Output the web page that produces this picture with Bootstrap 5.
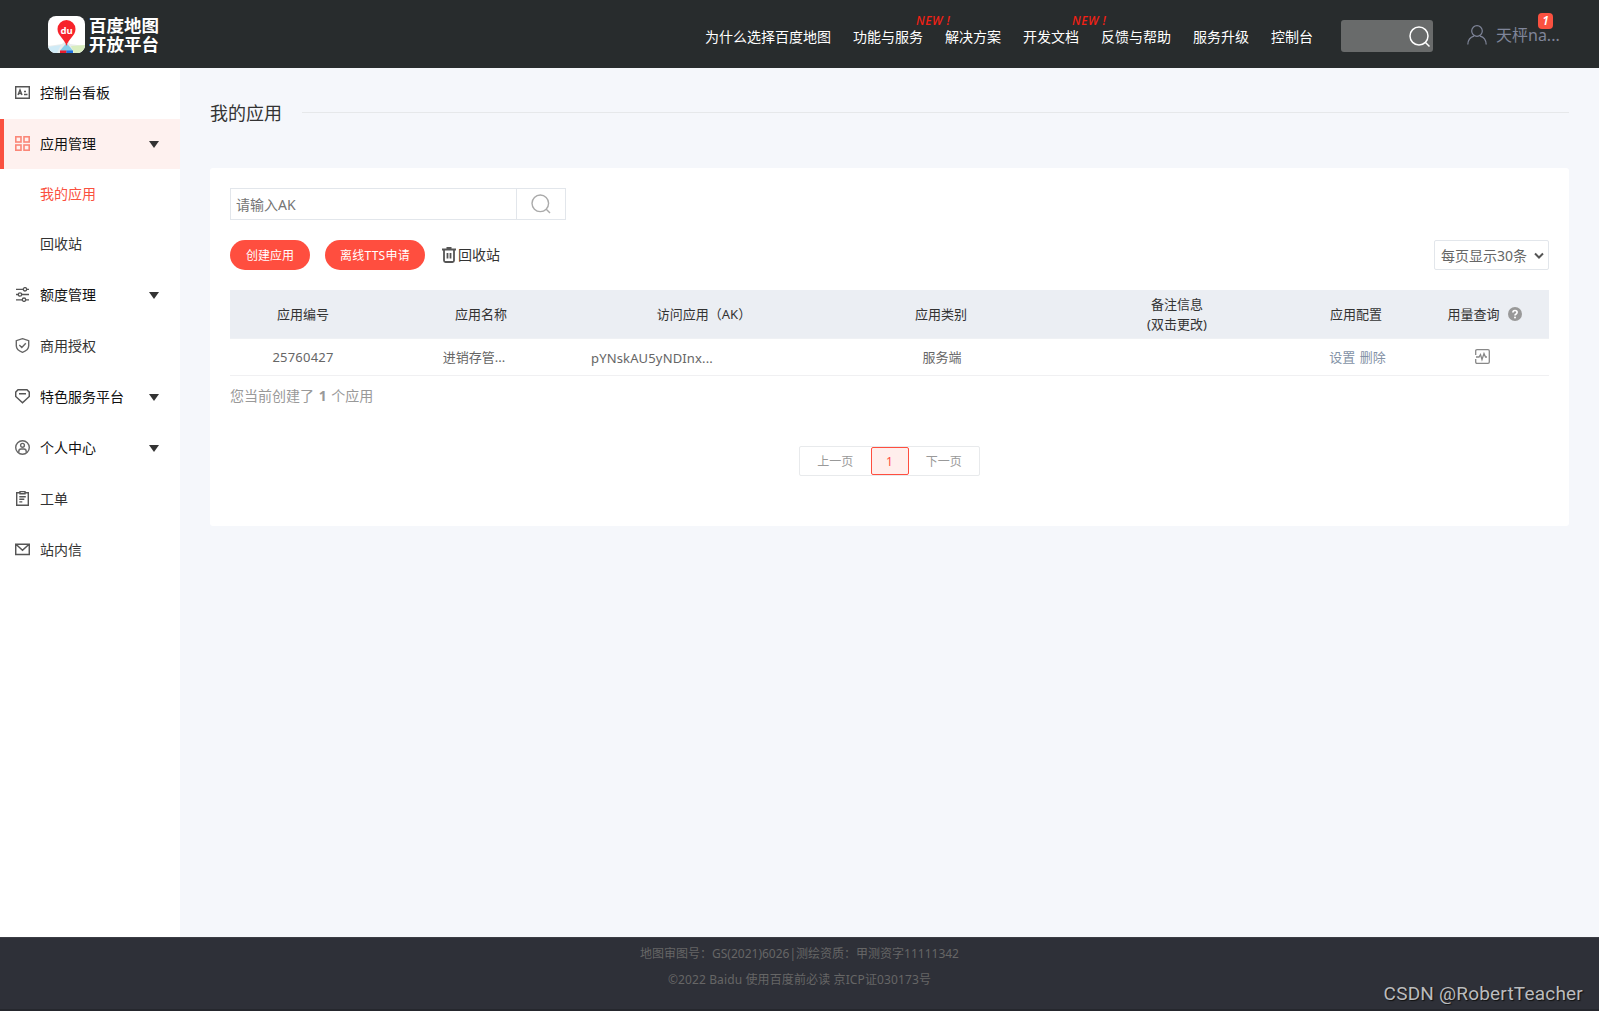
<!DOCTYPE html>
<html lang="zh-CN">
<head>
<meta charset="utf-8">
<meta name="viewport" content="width=device-width, initial-scale=1">
<title>百度地图开放平台 - 我的应用</title>
<link rel="stylesheet" href="https://cdn.jsdelivr.net/npm/bootstrap@5.3.0/dist/css/bootstrap.min.css">
<style>
body{font-family:"Noto Sans","Noto Sans CJK SC",sans-serif;font-size:14px;line-height:20px;color:#333;background:#f5f7fb;height:1011px;overflow:hidden}
a{color:inherit;text-decoration:none}
svg{display:block;flex:none}
.topbar{height:68px;background:#282c2d;color:#fff;padding:0 39px 0 48px}
.brand-words{font-family:"Noto Sans CJK SC",sans-serif;font-weight:700;font-size:17.5px;line-height:19px;margin-left:4px;padding-bottom:1px}
.topnav{gap:22px;padding-top:6px;margin-right:28px}
.tag-new{position:absolute;left:-29px;top:-14px;font-size:12px;font-style:italic;font-weight:500;color:#f32014;line-height:16px;letter-spacing:.5px;white-space:nowrap}
.topsearch{width:92px;height:32px;background:#696b6b;border-radius:3px;padding-right:3px;margin:4px 34px 0 0}
.user-icon{margin-top:2px}
.username{font-size:16px;color:#7f8599;width:64px;margin:2px 0 0 9px;white-space:nowrap}
.msg-count{position:absolute;left:42px;top:-12px;width:15px;height:16px;border-radius:4px;background:#fa5140;color:#fff;font-size:12px;font-style:italic;font-weight:600;line-height:16px;text-align:center}
.sidebar{width:180px;background:#fff}
.side-item{height:50px;margin-top:1px;padding-left:15px;padding-right:21px;color:#111}
.side-item:first-child{margin-top:0}
.side-item svg{margin-top:-2px}
.side-item span{margin-left:10px}
.side-item.plain{color:#333}
.side-item.current{background:#fef1ef;border-left:4px solid #fa5140;padding-left:11px}
.side-sub{height:50px;padding-left:40px}
.caret-down{margin-left:auto;width:0;height:0;border:5px solid transparent;border-top:7px solid #333;border-bottom:0}
.red-text{color:#fa5140}
.content-area{padding:30px 30px 0}
.page-title{font-size:18px;line-height:30px;font-weight:400;margin:0 20px 0 0}
.title-line{height:1px;background:#e6e8ea;margin-top:-1px}
.panel{height:358px;border-radius:3px;margin-top:40px;padding:20px}
.ak-search{width:336px;height:32px;border:1px solid #e2e6eb}
.ak-search input{border:0;outline:0;padding:2px 5px 0;width:285px;font-size:14px;background:none}
.ak-search input::placeholder{color:#757575;opacity:1}
.ak-btn{border:0;border-left:1px solid #e2e6eb;background:#fff;padding:0;width:49px}
.tool-row{margin-top:20px}
.pill{height:30px;width:80px;border:0;border-radius:15px;background:#ff4e3f;color:#fff;font-size:12px;line-height:28px;padding:2px 0 0;text-align:center}
.pill.wide{width:100px;margin-left:15px;letter-spacing:.25px}
.bin-link{margin-left:17px;gap:2px}
.page-size{width:115px;height:30px;border:1px solid #e2e6eb;border-radius:2px;padding:1px 4px 0 6px;color:#666;background:#fff}
.app-table{width:1319px;table-layout:fixed;margin:20px 0 0;font-size:13px;color:#666;text-align:center;border-collapse:separate;border-spacing:0}
.app-table th{height:49px;padding:0 0 1px;background:#ebeef3;color:#333;font-weight:400;vertical-align:middle;border-bottom:1px solid #eff1f4}
.app-table td{height:37px;padding:0 0 1px;vertical-align:middle;border-bottom:1px solid #f0f0f2}
.app-table .ak-head{padding-left:6px}
.app-table .usage-head{padding-right:4px}
.app-table .id-cell{letter-spacing:.22px}
.app-table .name-cell{padding-right:14px}
.app-table .ak-cell{padding:2px 98px 0 0;letter-spacing:.15px}
.app-table .kind-cell{padding-left:2px}
.app-table .link-cell{color:#8492a6;padding-left:3px;word-spacing:1px}
.app-table .usage-cell{padding-right:8px}
.summary{color:#999;margin:10px 0 0;word-spacing:1px}
.pager{height:30px;border:1px solid #e8eaec;border-radius:2px;color:#999;font-size:12px;line-height:30px;margin-top:40px}
.pager a{width:70.5px;text-align:center}
.pager .on{width:38px;border:1px solid #ff4e3f;border-radius:2px;background:#ffeeec;color:#ff4e3f;line-height:28px}
.foot{height:74px;background:#2e3038;border-top:1px solid #3b3d44;border-bottom:2px solid #25272d;font-size:12px;line-height:26px;color:#666;text-align:center;padding-top:3px}
.legal{letter-spacing:.12px}
.watermark{position:absolute;right:16px;bottom:2px;font-family:Roboto,sans-serif;font-size:19px;line-height:26px;color:#bbbcbe;text-shadow:1px 1px 1px #111;letter-spacing:.2px;white-space:nowrap}
</style>
<script src="https://cdn.jsdelivr.net/npm/bootstrap@5.3.0/dist/js/bootstrap.bundle.min.js"></script>
</head>
<body class="d-flex flex-column">
<header class="topbar d-flex align-items-center">
  <a href="#" class="d-flex align-items-center me-auto">
    <svg width="37" height="37" viewBox="0 0 37 37"><defs><clipPath id="tile"><rect width="37" height="37" rx="8"/></clipPath></defs><g clip-path="url(#tile)"><rect width="37" height="37" fill="#fff"/><path d="M0 30l14-2 5-5 3 5 15 2v7H0z" fill="#e9ecec"/><path d="M0 31l13-2-4 8H0z" fill="#cfeaf6"/><path d="M18.500 27l-6 7v3h12v-3z" fill="#86cde8"/><path d="M23 30l14-1v8H26z" fill="#d9eebf"/><path d="M12 34.500h6.500V37H12z" fill="#e91d2d"/><path d="M18.500 34.500H25V37h-6.500z" fill="#1f6fe0"/></g><path d="M18.500 30C17 23 9.500 20 9.500 13a9 9 0 0 1 18 0c0 7-7.500 10-9 17z" fill="#f7232b"/><text x="18.500" y="17.500" text-anchor="middle" font-family="Noto Sans" font-weight="700" font-size="9.500" fill="#fff">du</text></svg>
    <div class="brand-words">百度地图<br>开放平台</div>
  </a>
  <nav class="topnav d-flex">
    <a href="#">为什么选择百度地图</a><a href="#">功能与服务</a>
    <a href="#" class="position-relative"><span class="tag-new">NEW !</span>解决方案</a><a href="#">开发文档</a>
    <a href="#" class="position-relative"><span class="tag-new">NEW !</span>反馈与帮助</a><a href="#">服务升级</a><a href="#">控制台</a>
  </nav>
  <div class="topsearch d-flex align-items-center justify-content-end"><svg width="21" height="21" viewBox="0 0 21 21" fill="none" stroke="#fff" stroke-width="1.500"><circle cx="10" cy="10" r="9"/><path d="M16 16l4.500 4.500"/></svg></div>
  <svg class="user-icon" width="20" height="20" viewBox="0 0 20 20" fill="none" stroke="#7f8599" stroke-width="1.200"><circle cx="10" cy="6" r="5.300"/><path d="M.8 19.500C1 15 4 12 7 11.200M13 11.200c3.500.8 6 4 6.200 8.300"/></svg>
  <div class="username position-relative">天枰na...<span class="msg-count">1</span></div>
</header>
<div class="d-flex flex-grow-1">
  <aside class="sidebar">
    <a href="#" class="side-item d-flex align-items-center"><svg width="15" height="15" viewBox="0 0 15 15" fill="none" stroke="#555" stroke-width="1.400"><path d="M.7 1.700h13.600v11.600H.7z"/><path d="M3 10l2-5 2 5M3.700 8.500h2.600M9 6.500h2M9 9.500h3.500"/></svg><span>控制台看板</span></a>
    <a href="#" class="side-item current d-flex align-items-center"><svg width="15" height="15" viewBox="0 0 15 15" fill="none" stroke="#fb8778" stroke-width="1.600"><rect x=".8" y=".8" width="5.200" height="5.200"/><rect x="9" y=".8" width="5.200" height="5.200"/><rect x=".8" y="9" width="5.200" height="5.200"/><rect x="9" y="9" width="5.200" height="5.200"/></svg><span>应用管理</span><i class="caret-down"></i></a>
    <a href="#" class="side-sub red-text d-flex align-items-center">我的应用</a>
    <a href="#" class="side-sub d-flex align-items-center">回收站</a>
    <a href="#" class="side-item d-flex align-items-center"><svg width="15" height="15" viewBox="0 0 15 15" fill="none" stroke="#555" stroke-width="1.300"><path d="M1 2.300h7M12 2.300h2M1 7.500h2M7 7.500h7M1 12.800h6M11 12.800h3"/><circle cx="10" cy="2.300" r="1.700"/><circle cx="5" cy="7.500" r="1.700"/><circle cx="9" cy="12.700" r="1.700"/></svg><span>额度管理</span><i class="caret-down"></i></a>
    <a href="#" class="side-item plain d-flex align-items-center"><svg width="15" height="15" viewBox="0 0 15 15" fill="none" stroke="#666" stroke-width="1.400"><path d="M7.500.7l6.200 2v5c0 3.200-2.700 5.300-6.200 6.600-3.500-1.300-6.200-3.400-6.200-6.600v-5zM4.300 7l2.500 2.400 4-4.200"/></svg><span>商用授权</span></a>
    <a href="#" class="side-item d-flex align-items-center"><svg width="15" height="15" viewBox="0 0 15 15" fill="none" stroke="#555" stroke-width="1.500"><path d="M3 .8h9l2.300 2.300v4.400l-6.800 6.300L.7 7.500V3.100zM4 4.700h7"/></svg><span>特色服务平台</span><i class="caret-down"></i></a>
    <a href="#" class="side-item d-flex align-items-center"><svg width="15" height="15" viewBox="0 0 15 15" fill="none" stroke="#666" stroke-width="1.400"><circle cx="7.500" cy="7.500" r="6.800"/><circle cx="7.500" cy="5.300" r="1.900"/><path d="M3.800 12.500v-1.300q0-2.200 2.200-2.200h3q2.200 0 2.200 2.200v1.300"/></svg><span>个人中心</span><i class="caret-down"></i></a>
    <a href="#" class="side-item plain d-flex align-items-center"><svg width="15" height="15" viewBox="0 0 15 15" fill="none" stroke="#555" stroke-width="1.400"><path d="M5 1.700H1.700v12.600h11.600V1.700H10"/><path d="M5 .6h5v2.200H5zM4.300 5.700h6.500M4.300 8.300h5M4.300 10.900h3"/></svg><span>工单</span></a>
    <a href="#" class="side-item plain d-flex align-items-center"><svg width="15" height="15" viewBox="0 0 15 15" fill="none" stroke="#555" stroke-width="1.500"><path d="M.7 2.300h13.600v10.200H.7zM1.500 2.800l6 5.400 6-5.400"/></svg><span>站内信</span></a>
  </aside>
  <main class="content-area flex-grow-1">
    <div class="d-flex align-items-center"><h1 class="page-title">我的应用</h1><div class="title-line flex-grow-1"></div></div>
    <section class="panel bg-white">
      <div class="ak-search d-flex"><input type="text" placeholder="请输入AK"><button class="ak-btn d-flex align-items-center justify-content-center" type="button" aria-label="搜索"><svg width="20" height="20" viewBox="0 0 20 20" fill="none" stroke="#aaa" stroke-width="1.400"><circle cx="9.300" cy="9.300" r="8.300"/><path d="M15 15l4 4"/></svg></button></div>
      <div class="tool-row d-flex align-items-center">
        <button type="button" class="pill">创建应用</button>
        <button type="button" class="pill wide">离线TTS申请</button>
        <a href="#" class="bin-link d-flex align-items-center"><svg width="14" height="16" viewBox="0 0 14 16" fill="none" stroke="#555" stroke-width="1.800"><path d="M0 2.500h14M4.500 1h5M2 3v10.500q0 1.500 1.500 1.500h7q1.500 0 1.500-1.500V3M5.500 6v5.500M8.500 6v5.500"/></svg><span>回收站</span></a>
        <div class="page-size d-flex align-items-center justify-content-between ms-auto"><span>每页显示30条</span><svg width="10" height="8" viewBox="0 0 10 8" fill="none" stroke="#555" stroke-width="2"><path d="M1 1.500l4 4 4-4"/></svg></div>
      </div>
      <table class="app-table">
        <colgroup><col style="width:146px"><col style="width:210px"><col style="width:230px"><col style="width:250px"><col style="width:222px"><col style="width:136px"><col style="width:125px"></colgroup>
        <thead><tr><th>应用编号</th><th>应用名称</th><th class="ak-head">访问应用（AK）</th><th>应用类别</th><th>备注信息<br>(双击更改)</th><th>应用配置</th><th class="usage-head"><div class="d-flex align-items-center justify-content-center gap-2">用量查询<svg width="14" height="14" viewBox="0 0 14 14"><circle cx="7" cy="7" r="7" fill="#999"/><path d="M4.900 5.600q0-2.100 2.100-2.100t2.100 1.800q0 1-1 1.600Q7 7.500 7 8.500" fill="none" stroke="#fff" stroke-width="1.700"/><circle cx="7" cy="10.600" r="1" fill="#fff"/></svg></div></th></tr></thead>
        <tbody><tr><td class="id-cell">25760427</td><td class="name-cell">进销存管...</td><td class="ak-cell">pYNskAU5yNDInx...</td><td class="kind-cell">服务端</td><td></td><td class="link-cell"><a href="#">设置</a> <a href="#">删除</a></td><td class="usage-cell"><svg class="mx-auto" width="15" height="15" viewBox="0 0 15 15" fill="none" stroke="#888" stroke-width="1.300"><path d="M.7 6V2q0-1.300 1.300-1.300h11q1.300 0 1.300 1.300v11q0 1.300-1.300 1.300H2Q.7 14.300.7 13v-3"/><path d="M1 8h3l1.500-2.500 1.500 5L9 4.500 10.500 8H12"/></svg></td></tr></tbody>
      </table>
      <p class="summary">您当前创建了 <b>1</b> 个应用</p>
      <div class="d-flex justify-content-center"><div class="pager d-flex"><a href="#">上一页</a><a href="#" class="on">1</a><a href="#">下一页</a></div></div>
    </section>
  </main>
</div>
<footer class="foot position-relative">
  <div>地图审图号：GS(2021)6026|测绘资质：甲测资字11111342</div>
  <div class="legal">©2022 Baidu 使用百度前必读 京ICP证030173号</div>
  <div class="watermark">CSDN @RobertTeacher</div>
</footer>
</body>
</html>
